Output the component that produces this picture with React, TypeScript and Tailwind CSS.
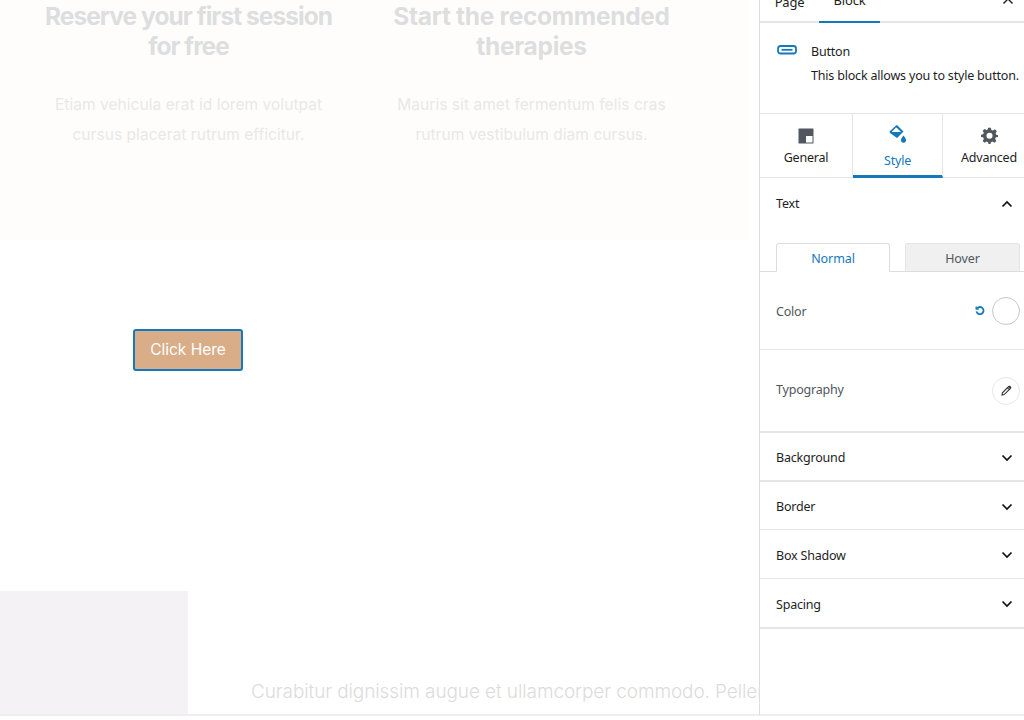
const sans = "font-['Noto_Sans','Open_Sans',sans-serif]";

function Chevron({ up = false }: { up?: boolean }) {
  return (
    <svg className="mt-[2px]" width="12" height="8" viewBox="0 0 12 8" fill="none" stroke="#111" strokeWidth="1.7">
      <path d={up ? "M1.5 6.5 L6 2 L10.5 6.5" : "M1.5 1.5 L6 6 L10.5 1.5"} />
    </svg>
  );
}

function Panel({ label, h, thick = false }: { label: string; h: string; thick?: boolean }) {
  return (
    <div className={`flex items-center justify-between pl-4 pr-[11px] border-b-[#e5e5e5] ${h} ${thick ? "border-b-2" : "border-b"}`}>
      <span className="mt-1 text-[12.5px] tracking-[-0.2px] text-[#1e1e1e]">{label}</span>
      <Chevron />
    </div>
  );
}

export default function App() {
  return (
    <div className="flex h-[720px] w-[1024px] overflow-hidden bg-white">
      <main className="flex h-[716px] w-[759px] shrink-0 flex-col overflow-hidden border-b-2 border-b-[#eeeeee] font-['Inter',sans-serif]">
        <section className="flex h-[240px] w-[750px] shrink-0 justify-start bg-[#fffdfb] pl-[17px]">
          <div className="mt-[1px] w-[343px] text-center">
            <h2 className="text-[24.5px] leading-[30px] font-bold tracking-[-0.95px] text-[#dddee0]">Reserve your first session<br />for free</h2>
            <p className="mt-[29px] text-[15.5px] leading-[30px] tracking-[0.05px] text-[#e8e8e8]">Etiam vehicula erat id lorem volutpat<br />cursus placerat rutrum efficitur.</p>
          </div>
          <div className="mt-[1px] w-[343px] text-center">
            <h2 className="text-[24.5px] leading-[30px] font-bold tracking-[-0.3px] text-[#dddee0]">Start the recommended<br />therapies</h2>
            <p className="mt-[29px] text-[15.5px] leading-[30px] tracking-[0.05px] text-[#e8e8e8]">Mauris sit amet fermentum felis cras<br />rutrum vestibulum diam cursus.</p>
          </div>
        </section>
        <section className="flex h-[351px] shrink-0 items-start pl-[133px] pt-[89px]">
          <button className="flex h-[42px] w-[110px] items-center justify-center rounded-[3px] border-[2.5px] border-[#1578bd] bg-[#d8ad88] text-[15.5px] text-white">Click Here</button>
        </section>
        <section className="flex flex-1 items-end">
          <div className="h-full w-[188px] shrink-0 bg-[#f5f2f5]" />
          <p className="mb-[9px] ml-[63px] text-[19px] leading-[26px] font-light tracking-[-0.1px] whitespace-nowrap text-[#dcdcdc]">Curabitur dignissim augue et ullamcorper commodo. Pellentesque habitant</p>
        </section>
      </main>
      <aside className={`flex h-[716px] w-[265px] shrink-0 flex-col overflow-hidden border-l border-l-[#dddddd] border-b-2 border-b-[#eeeeee] ${sans}`}>
        <div className="relative flex h-[23px] shrink-0 border-b-2 border-b-[#e5e5e5] text-[13px] tracking-[-0.2px] text-[#1e1e1e]">
          <div className="flex h-[21px] w-[59px] items-end justify-center leading-[0] pb-[19px]">Page</div>
          <div className="-mb-[2px] flex h-[23px] w-[61px] items-end justify-center border-b-2 border-b-[#1578bd] pb-[21px] leading-[0]">Block</div>
          <svg className="absolute top-[-6px] right-[11px]" width="10" height="10" viewBox="0 0 10 10" stroke="#1e1e1e" strokeWidth="1.4"><path d="M0.5 0.5 L9.5 9.5 M9.5 0.5 L0.5 9.5" /></svg>
        </div>
        <div className="flex h-[90px] shrink-0 pt-[17px] pl-[17px]">
          <svg className="mt-[5px]" width="20" height="10" viewBox="0 0 20 10" fill="none" stroke="#1578bd" strokeWidth="1.8">
            <rect x="1" y="1" width="18" height="7.5" rx="2.5" />
            <path d="M4.5 4.8 H15.5" />
          </svg>
          <div className="ml-[14px] text-[12.5px] leading-[24px] tracking-[-0.19px] text-[#1e1e1e]">
            <div>Button</div>
            <div className="whitespace-nowrap">This block allows you to style button.</div>
          </div>
        </div>
        <div className="flex h-[65px] shrink-0 border-y border-y-[#e5e5e5] text-[12.5px] tracking-[-0.2px] text-[#1e1e1e]">
          <div className="flex w-[93px] shrink-0 flex-col items-center border-r border-r-[#e5e5e5] pt-[14px]">
            <svg width="16" height="16" viewBox="0 0 16 16"><path fill="#50575e" d="M1 0.5 H15 a0.5 0.5 0 0 1 .5 .5 V15 a0.5 0.5 0 0 1 -.5 .5 H1 a.5 .5 0 0 1 -.5 -.5 V1 a.5 .5 0 0 1 .5 -.5Z" /><rect x="8" y="8" width="6.5" height="6.5" fill="#fff" /></svg>
            <span className="mt-[5px] leading-[18px]">General</span>
          </div>
          <div className="-mb-px flex w-[90px] shrink-0 flex-col items-center border-b-[3px] border-b-[#1578bd] border-r border-r-[#e5e5e5] pt-[11px] text-[#1578bd]">
            <svg width="18" height="20" viewBox="0 0 18 20" fill="#1578bd">
              <path d="M7 0.5 L8 0 L14.5 6.5 L8 13 L1 8 Q0 7 1 6 L6 1.5Z M7 2.6 L2.6 7 H12 L8 3Z" fillRule="evenodd" />
              <path d="M14.5 10.5 C15.8 12.5 17 13.5 17 15.2 A2.5 2.5 0 0 1 12 15.2 C12 13.5 13.2 12.5 14.5 10.5Z" />
            </svg>
            <span className="mt-[7px] leading-[18px]">Style</span>
          </div>
          <div className="flex w-[92px] shrink-0 flex-col items-center pt-[13px]">
            <svg width="17" height="17" viewBox="0 0 24 24" fill="#50575e" fillRule="evenodd">
              <path d="M10 1 H14 L14.6 4.1 L16.9 5.1 L19.6 3.3 L22.4 6.1 L20.6 8.8 L21.6 11 L24 11.6 V12.4 V14 L21 14.6 L20 16.9 L21.7 19.6 L19 22.3 L16.3 20.6 L14 21.6 L13.4 24 H10.6 L10 21.6 L7.7 20.6 L5 22.3 L2.3 19.6 L4 16.9 L3 14.6 L0 14 V11 L3 10.4 L4 8.1 L2.3 5.4 L5 2.7 L7.7 4.4 L9.4 3.7Z M12 8 A4.3 4.3 0 1 0 12 16.6 A4.3 4.3 0 1 0 12 8Z" />
            </svg>
            <span className="mt-[5px] leading-[18px]">Advanced</span>
          </div>
        </div>
        <div className="flex h-[50px] shrink-0 items-center justify-between pl-4 pr-[11px]">
          <span className="mt-[2px] text-[12.5px] tracking-[-0.2px] text-[#1e1e1e]">Text</span>
          <Chevron up />
        </div>
        <div className="flex h-[44px] shrink-0 items-end gap-[15px] border-b border-b-[#dddddd] pl-4 pr-[4px] text-[12.5px] tracking-[-0.1px]">
          <div className="-mb-px flex h-[29px] w-[114px] items-center justify-center rounded-t-[3px] border border-[#dddddd] border-b-white bg-white pt-1 text-[#1578bd]">Normal</div>
          <div className="flex h-[28px] w-[115px] items-center justify-center rounded-t-[3px] border border-b-0 border-[#e5e5e5] bg-[#f0f0f0] pt-1 text-[#50575e]">Hover</div>
        </div>
        <div className="flex h-[78px] shrink-0 items-center justify-between border-b border-b-[#e5e5e5] pl-4 pr-[4px]">
          <span className="mt-1 text-[12.5px] tracking-[-0.2px] text-[#50575e]">Color</span>
          <div className="flex items-center gap-[7px]">
            <svg width="10" height="10" viewBox="0 0 10 10" fill="none" stroke="#1578bd" strokeWidth="1.8">
              <path d="M2.2 2.2 A3.6 3.6 0 1 1 1.4 5.4" />
              <path d="M1.2 0.6 V3 H3.8" strokeWidth="1.3" />
            </svg>
            <div className="size-[28px] rounded-full border border-[#c8c8c8] bg-white" />
          </div>
        </div>
        <div className="flex h-[83px] shrink-0 items-center justify-between border-b-2 border-b-[#e5e5e5] pl-4 pr-[4px]">
          <span className="text-[12.5px] tracking-[-0.2px] text-[#50575e]">Typography</span>
          <div className="flex size-[28px] items-center justify-center rounded-full border border-[#e8e8e8] bg-white">
            <svg width="11" height="11" viewBox="0 0 11 11" fill="none" stroke="#333" strokeWidth="1.1"><path d="M1 10 L1.4 7.8 L7.6 1.6 L9.4 3.4 L3.2 9.6 Z M6.4 2.8 L8.2 4.6" /><path d="M8.2 1 L10 2.8" strokeWidth="1.6" /></svg>
          </div>
        </div>
        <Panel label="Background" h="h-[49px] shrink-0" thick />
        <Panel label="Border" h="h-[48px] shrink-0" />
        <Panel label="Box Shadow" h="h-[49px] shrink-0" />
        <Panel label="Spacing" h="h-[50px] shrink-0" thick />
      </aside>
    </div>
  );
}
